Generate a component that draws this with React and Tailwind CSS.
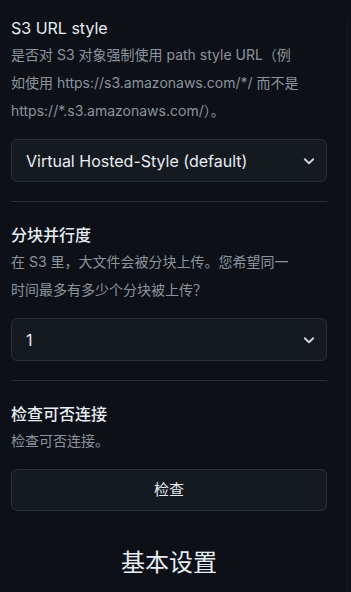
import React from 'react';

const font = { fontFamily: 'Inter, "Noto Sans CJK SC", sans-serif' };

const Chevron = () => (
    <svg className="w-3 h-3 text-[#c9d1d9]" viewBox="0 0 12 12" fill="none" stroke="currentColor" strokeWidth="2" strokeLinecap="round" strokeLinejoin="round">
        <path d="M1.8 4.2 6 8.2l4.2-4" />
    </svg>
);

const Select = ({ value }) => (
    <div className="mt-[14px] h-[43px] flex items-center justify-between pl-[14px] pr-[11px] bg-[#151a21] border border-[#2a3038] rounded-md">
        <span className="text-[16px] text-[#e6edf3]">{value}</span>
        <Chevron />
    </div>
);

const Section = ({ title, lines, children, first, latinTitle }) => (
    <div className={first ? 'pt-4' : 'pt-[21px]'}>
        <h3 className={`text-[16px] leading-6 text-[#e6edf3] ${latinTitle ? 'font-normal' : 'font-medium'}`}>{title}</h3>
        <p className="mt-px text-[14px] leading-[28px] text-[#8b949e] whitespace-nowrap">
            {lines.map((line, i) => (
                <span key={i} className="block">{line}</span>
            ))}
        </p>
        {children}
    </div>
);

export default function App() {
    return (
        <div className="relative min-h-[592px] bg-[#0d1117] px-[11px] pr-[24px]" style={font}>
            <div className="absolute right-[3px] top-[20px] bottom-0 w-px bg-[#161b22]" />
            <Section
                first
                latinTitle
                title="S3 URL style"
                lines={[
                    '是否对 S3 对象强制使用 path style URL（例',
                    '如使用 https://s3.amazonaws.com/*/ 而不是',
                    'https://*.s3.amazonaws.com/）。',
                ]}
            >
                <Select value="Virtual Hosted-Style (default)" />
            </Section>
            <div className="mt-[19px] h-px bg-[#272c33]" />

            <Section
                title="分块并行度"
                lines={[
                    '在 S3 里，大文件会被分块上传。您希望同一',
                    '时间最多有多少个分块被上传？',
                ]}
            >
                <Select value="1" />
            </Section>
            <div className="mt-[19px] h-px bg-[#272c33]" />

            <Section title="检查可否连接" lines={['检查可否连接。']}>
                <button className="mt-[14px] w-full h-[42px] flex items-center justify-center bg-[#141a20] border border-[#2a3038] rounded-md text-[15px] text-[#e6edf3]">
                    检查
                </button>
            </Section>

            <h2 className="mt-[36px] text-center text-[24px] leading-8 text-[#e6edf3]">基本设置</h2>
        </div>
    );
}
